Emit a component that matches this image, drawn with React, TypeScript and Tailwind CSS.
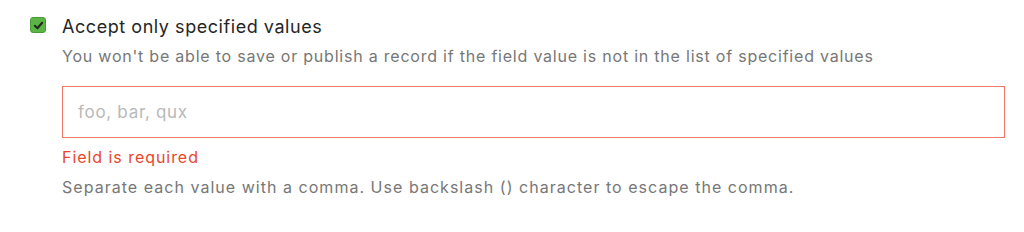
export default function App() {
  return (
    <div className="w-[1024px] h-[232px] bg-white font-['Inter',sans-serif] pt-[15px] pl-[30px] pr-[19px]">
      <div className="flex gap-4">
        <div className="mt-[2px] w-4 h-4 rounded-[3px] bg-[#5cb346] border border-[#4a9a37] flex items-center justify-center flex-shrink-0">
          <svg width="11" height="11" viewBox="0 0 12 12">
            <path d="M2 6.3 L4.8 9 L10 3" fill="none" stroke="#1f2a1a" strokeWidth="2.2" strokeLinecap="round" strokeLinejoin="round" />
          </svg>
        </div>
        <div className="flex-1">
          <div className="text-[18px] leading-[24px] tracking-[0.55px] text-[#262626]">Accept only specified values</div>
          <div className="mt-[6px] text-[16px] leading-[22px] tracking-[0.78px] text-[#777]">
            You won't be able to save or publish a record if the field value is not in the list of specified values
          </div>
          <input
            className="mt-[19px] w-full h-[52px] border border-[#f27a65] px-[15px] text-[17px] tracking-[0.7px] text-[#333] placeholder:text-[#b9b9b9] outline-none"
            placeholder="foo, bar, qux"
          />
          <div className="mt-[8px] text-[16px] leading-[22px] tracking-[0.95px] text-[#e9472c]">Field is required</div>
          <div className="mt-[8px] text-[16px] leading-[22px] tracking-[1.03px] text-[#777]">
            Separate each value with a comma. Use backslash () character to escape the comma.
          </div>
        </div>
      </div>
    </div>
  );
}
